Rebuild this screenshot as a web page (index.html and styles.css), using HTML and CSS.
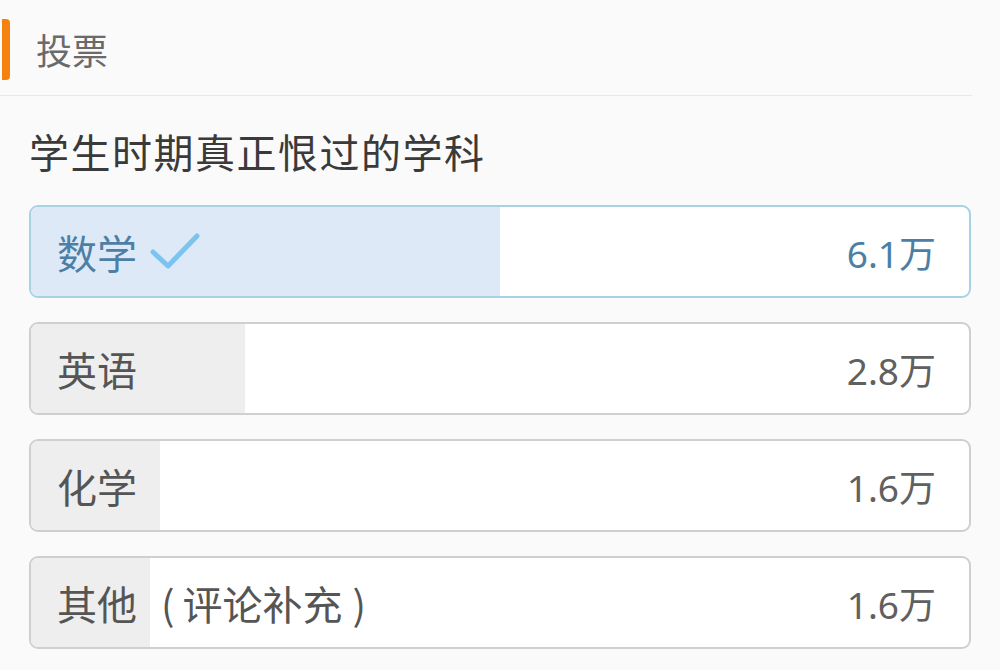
FILE: index.html
```html
<!DOCTYPE html>
<html lang="zh">
<head>
<meta charset="utf-8">
<link rel="stylesheet" href="styles.css">
</head>
<body>
<div class="page">
  <div class="header">
    <span class="accent"></span>
    <span class="header-title">投票</span>
  </div>
  <div class="poll">
    <div class="question">学生时期真正恨过的学科</div>
    <div class="options">
      <div class="option selected">
        <div class="fill" style="width:50%"></div>
        <div class="content">
          <span class="label">数学<svg class="check" width="52" height="40" viewBox="0 0 52 40"><path d="M4 21 L19 35 L48 5" fill="none" stroke="#7cc4f0" stroke-width="5" stroke-linecap="round" stroke-linejoin="round"/></svg></span>
          <span class="count">6.1万</span>
        </div>
      </div>
      <div class="option">
        <div class="fill" style="width:22.8%"></div>
        <div class="content">
          <span class="label">英语</span>
          <span class="count">2.8万</span>
        </div>
      </div>
      <div class="option">
        <div class="fill" style="width:13.75%"></div>
        <div class="content">
          <span class="label">化学</span>
          <span class="count">1.6万</span>
        </div>
      </div>
      <div class="option">
        <div class="fill" style="width:12.7%"></div>
        <div class="content">
          <span class="label">其他<span class="paren-open">(</span>评论补充<span class="paren-close">)</span></span>
          <span class="count">1.6万</span>
        </div>
      </div>
    </div>
  </div>
</div>
</body>
</html>
```

FILE: styles.css
```css
html, body {
  margin: 0;
  padding: 0;
  background: #fafafa;
}
body {
  width: 1000px;
  height: 670px;
  overflow: hidden;
  font-family: "Noto Sans CJK SC", "Noto Sans", sans-serif;
}
.page {
  width: 1000px;
}
.header {
  display: flex;
  align-items: center;
  height: 96px;
  margin-right: 28px;
  border-bottom: 1px solid #e8e8e8;
  box-sizing: border-box;
  padding-top: 3px;
}
.accent {
  display: block;
  width: 8px;
  height: 61px;
  margin-left: 2px;
  border-radius: 0 4px 4px 0;
  background: #f5820f;
}
.header-title {
  margin-left: 26px;
  font-size: 36px;
  line-height: 40px;
  color: #6a6a6a;
}
.poll {
  padding: 0 29px 0 29px;
}
.question {
  margin-top: 28px;
  height: 54px;
  font-size: 40px;
  line-height: 54px;
  color: #3a3a3a;
  letter-spacing: 1.5px;
}
.options {
  margin-top: 27px;
  display: flex;
  flex-direction: column;
  gap: 24px;
}
.option {
  position: relative;
  height: 93px;
  box-sizing: border-box;
  border: 2px solid #cfcfcf;
  border-radius: 9px;
  background: #ffffff;
  overflow: hidden;
}
.option .fill {
  position: absolute;
  left: 0;
  top: 0;
  bottom: 0;
  background: #eeeeee;
}
.option.selected {
  border-color: #a6d3e3;
}
.option.selected .fill {
  background: #dde9f6;
}
.content {
  position: relative;
  display: flex;
  align-items: center;
  justify-content: space-between;
  height: 100%;
  padding: 0 33px 0 26px;
}
.label {
  display: flex;
  align-items: center;
  font-size: 40px;
  color: #555555;
}
.paren-open {
  margin-left: 24px;
  margin-right: 8px;
}
.paren-close {
  margin-left: 10px;
}
.count {
  font-family: "Noto Sans", "Noto Sans CJK SC", sans-serif;
  font-size: 37px;
  color: #606060;
}
.selected .label,
.selected .count {
  color: #4d7fa6;
}
.check {
  margin-left: 12px;
  margin-top: -2px;
}
```
